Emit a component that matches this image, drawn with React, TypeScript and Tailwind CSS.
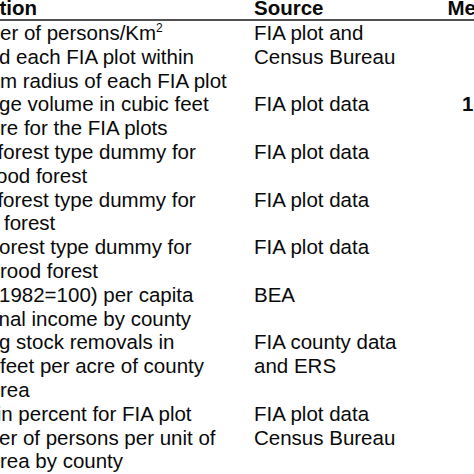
import React from "react";

type Line = { t: React.ReactNode; ml: string };

const rows: { desc: Line[]; src: string[]; mean?: string }[] = [
  {
    desc: [
      {
        t: (
          <>
            er of persons/Km
            <span className="relative top-[-8px] text-[12px] leading-none">2</span>
          </>
        ),
        ml: "ml-0",
      },
      { t: "d each FIA plot within", ml: "ml-[-1px]" },
      { t: "m radius of each FIA plot", ml: "ml-0" },
    ],
    src: ["FIA plot and", "Census Bureau"],
  },
  {
    desc: [
      { t: "ge volume in cubic feet", ml: "ml-[-1px]" },
      { t: "re for the FIA plots", ml: "ml-0" },
    ],
    src: ["FIA plot data"],
    mean: "1",
  },
  {
    desc: [
      { t: "forest type dummy for", ml: "ml-[-2.4px]" },
      { t: "ood forest", ml: "ml-[-4px]" },
    ],
    src: ["FIA plot data"],
  },
  {
    desc: [
      { t: "forest type dummy for", ml: "ml-[-2.6px]" },
      { t: "forest", ml: "ml-[4px]" },
    ],
    src: ["FIA plot data"],
  },
  {
    desc: [
      { t: "orest type dummy for", ml: "ml-[-1px]" },
      { t: "rood forest", ml: "ml-0" },
    ],
    src: ["FIA plot data"],
  },
  {
    desc: [
      { t: "1982=100) per capita", ml: "ml-[-1px]" },
      { t: "nal income by county", ml: "ml-[-1.5px]" },
    ],
    src: ["BEA"],
  },
  {
    desc: [
      { t: "g stock removals in", ml: "ml-[-1px]" },
      { t: "feet per acre of county", ml: "ml-0" },
      { t: "rea", ml: "ml-0" },
    ],
    src: ["FIA county data", "and ERS"],
  },
  {
    desc: [{ t: "in percent for FIA plot", ml: "ml-[-3.3px]" }],
    src: ["FIA plot data"],
  },
  {
    desc: [
      { t: "er of persons per unit of", ml: "ml-[-1px]" },
      { t: "rea by county", ml: "ml-0" },
    ],
    src: ["Census Bureau"],
  },
];

export default function App() {
  return (
    <div className="w-[474px] h-[474px] overflow-hidden bg-white text-[#0a0a0a] font-['Liberation_Sans',Arial,sans-serif] text-[20.5px] leading-[23.8px]">
      <div className="-mt-[4px] h-[25px] border-b-2 border-[#505050] flex font-bold whitespace-nowrap">
        <div className="w-[254px] shrink-0 overflow-hidden">
          <div className="ml-[-0.5px]">tion</div>
        </div>
        <div className="w-[193.5px] shrink-0">Source</div>
        <div className="shrink-0">Mean</div>
      </div>
      {rows.map((r, i) => (
        <div key={i} className="flex whitespace-nowrap">
          <div className="w-[254px] shrink-0 overflow-hidden">
            {r.desc.map((l, j) => (
              <div key={j} className={l.ml}>
                {l.t}
              </div>
            ))}
          </div>
          <div className="w-[193.5px] shrink-0">
            {r.src.map((s, j) => (
              <div key={j}>{s}</div>
            ))}
          </div>
          <div className="shrink-0 pl-[14.5px] font-bold">{r.mean ?? ""}</div>
        </div>
      ))}
    </div>
  );
}
